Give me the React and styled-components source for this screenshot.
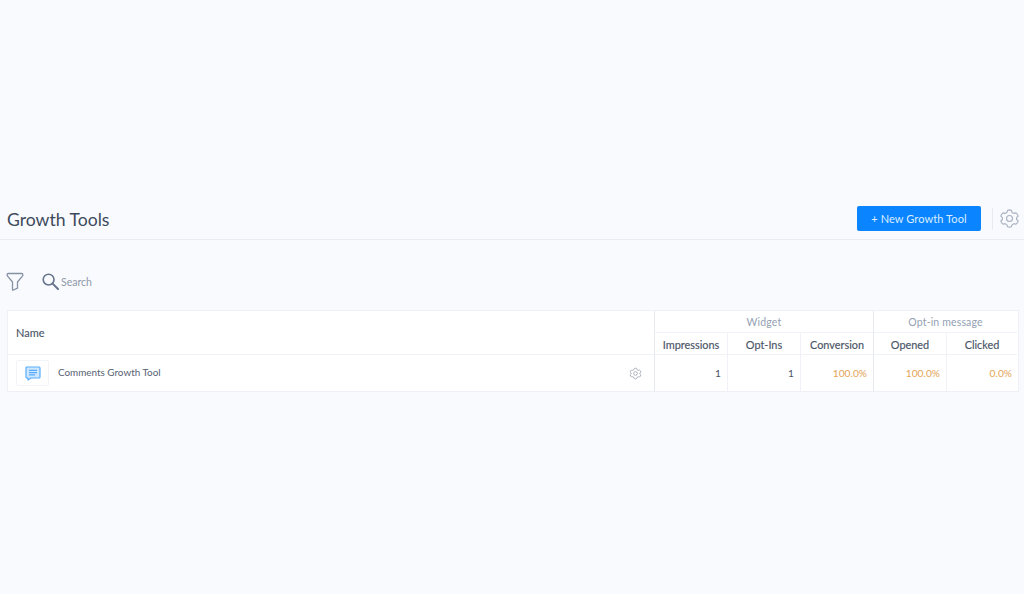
import styled, { createGlobalStyle } from "styled-components";

const GlobalStyle = createGlobalStyle`
  html, body {
    margin: 0;
    background: #f9fafe;
    font-family: Lato, "Open Sans", sans-serif;
    overflow: hidden;
  }
`;

const Page = styled.div`
  padding-top: 200px;
  height: 394px;
`;

const Header = styled.header`
  display: flex;
  align-items: center;
  justify-content: space-between;
  height: 39px;
  padding: 0 4px 0 7px;
  border-bottom: 1px solid #e8ebf1;
`;

const Title = styled.h1`
  margin: 0;
  font-size: 17.6px;
  font-weight: 400;
  color: #3d4a5c;
  line-height: 39px;
`;

const Actions = styled.div`
  display: flex;
  align-items: center;
  margin-top: -2px;
`;

const NewButton = styled.button`
  width: 124px;
  height: 25px;
  border: 0;
  border-radius: 2px;
  background: #0a84ff;
  color: #dcedff;
  font: 400 11px Lato, sans-serif;
  letter-spacing: 0.1px;
  padding: 0;
`;

const Divider = styled.span`
  width: 1px;
  height: 22px;
  margin: 0 6px 0 11px;
  background: #e8ebf1;
`;

const Toolbar = styled.div`
  display: flex;
  align-items: center;
  height: 30px;
  margin-top: 26px;
  padding-left: 6px;
`;

const SearchBox = styled.div`
  display: flex;
  align-items: center;
  gap: 2px;
  margin-left: 18px;
  color: #8f99a8;
  font-size: 10.5px;
`;

const SearchLabel = styled.span`
  padding-top: 2px;
`;

const Table = styled.div`
  display: grid;
  grid-template-columns: 646px 73px 73px 73px 73px 71px;
  grid-template-rows: 22px 22px 36px;
  margin: 15px 6px 0 8px;
  background: #fff;
  box-shadow: 0 0 0 1px #eef0f6;
`;

const Cell = styled.div`
  display: flex;
  align-items: center;
  justify-content: ${(p) => p.$align || "center"};
  box-sizing: border-box;
  border-left: ${(p) => (p.$strong ? "1px solid #e6e9f1" : "1px solid #f0f2f7")};
  border-bottom: ${(p) => (p.$last ? "0" : "1px solid #f0f2f7")};
  padding: 0 ${(p) => p.$pad || 6}px 0 5px;
  font-size: 10.2px;
  color: ${(p) => p.$color || "#4a5567"};
  grid-column: ${(p) => p.$col || "auto"};
  grid-row: ${(p) => p.$row || "auto"};
`;

const MetricHead = styled(Cell)`
  padding: 1px 0 0;
  font-size: 10.9px;
  -webkit-text-stroke: 0.15px #4a5567;
`;

const NameHead = styled(Cell)`
  border-left: 0;
  padding-left: 8px;
  font-size: 11px;
  -webkit-text-stroke: 0.1px #4a5567;
`;

const GroupHead = styled(Cell)`
  padding: 0;
  color: #949fb3;
  font-size: 10.5px;
  letter-spacing: 0.15px;
`;

const NameCell = styled(Cell)`
  border-left: 0;
  justify-content: flex-start;
  padding: 0 12px 0 8px;
  color: #566172;
  font-size: 9.9px;
`;

const ToolIcon = styled.span`
  display: flex;
  align-items: center;
  justify-content: center;
  width: 33px;
  height: 26px;
  margin-right: 9px;
  box-sizing: border-box;
  border: 1px solid #f2f4f8;
  border-radius: 2px;
`;

const ToolName = styled.span`
  flex: 1;
  margin-top: -3px;
`;

const Gear = ({ size, color }) => (
  <svg width={size} height={size} viewBox="0 0 24 24" fill="none" stroke={color} strokeWidth="1.3" strokeLinejoin="round">
    <path d="M12 2.2l2.2 0.5 0.8 2.4 2 1.1 2.4-0.6 1.6 1.6 0.9 2.1-1.8 1.7v2.1l1.8 1.7-0.9 2.1-1.6 1.6-2.4-0.6-2 1.1-0.8 2.4-2.2 0.5-2.2-0.5-0.8-2.4-2-1.1-2.4 0.6-1.6-1.6-0.9-2.1 1.8-1.7v-2.1l-1.8-1.7 0.9-2.1 1.6-1.6 2.4 0.6 2-1.1 0.8-2.4z" />
    <circle cx="12" cy="12" r="3.4" />
  </svg>
);

const Funnel = () => (
  <svg width="18" height="19" viewBox="0 0 18 19" fill="none" stroke="#8592a4" strokeWidth="1.3" strokeLinejoin="round">
    <path d="M2.2 1.5h13.6a1 1 0 0 1 1 1v1.2L11.5 10v6.2L7.4 18H6.5v-8L1.2 3.7V2.5a1 1 0 0 1 1-1z" />
  </svg>
);

const SearchGlass = () => (
  <svg width="17" height="17" viewBox="0 0 17 17" fill="none" stroke="#65748a" strokeWidth="1.6" strokeLinecap="round">
    <circle cx="6.6" cy="6.6" r="5.4" />
    <path d="M10.6 10.6l5.4 5.4" strokeWidth="2" />
  </svg>
);

const CommentIcon = () => (
  <svg width="16" height="15" viewBox="0 0 16 15" fill="#cfe6ff" stroke="#58aefc" strokeWidth="1.2" strokeLinejoin="round">
    <path d="M2 1h12a1 1 0 0 1 1 1v9a1 1 0 0 1-1 1H6l-3 2v-2H2a1 1 0 0 1-1-1V2a1 1 0 0 1 1-1z" />
    <path d="M4 4.3h8M4 6.6h8M4 8.9h6" fill="none" />
  </svg>
);

const metricHeads = ["Impressions", "Opt-Ins", "Conversion", "Opened", "Clicked"];
const metricValues = [
  { value: "1", color: "#4a5567" },
  { value: "1", color: "#4a5567" },
  { value: "100.0%", color: "#e5a356" },
  { value: "100.0%", color: "#e5a356" },
  { value: "0.0%", color: "#e5a356", pad: 5 },
];
const strongCols = [0, 3];

export default function App() {
  return (
    <Page>
      <GlobalStyle />
      <Header>
        <Title>Growth Tools</Title>
        <Actions>
          <NewButton>+ New Growth Tool</NewButton>
          <Divider />
          <Gear size={21} color="#a9b2c0" />
        </Actions>
      </Header>

      <Toolbar>
        <Funnel />
        <SearchBox>
          <SearchGlass />
          <SearchLabel>Search</SearchLabel>
        </SearchBox>
      </Toolbar>

      <Table>
        <NameHead $col="1" $row="1 / span 2" $align="flex-start">Name</NameHead>
        <GroupHead $col="2 / span 3" $row="1" $strong>Widget</GroupHead>
        <GroupHead $col="5 / span 2" $row="1" $strong>Opt-in message</GroupHead>

        {metricHeads.map((head, i) => (
          <MetricHead key={head} $col={i + 2} $row="2" $strong={strongCols.includes(i)}>
            {head}
          </MetricHead>
        ))}

        <NameCell $col="1" $row="3" $last>
          <ToolIcon>
            <CommentIcon />
          </ToolIcon>
          <ToolName>Comments Growth Tool</ToolName>
          <Gear size={13} color="#8d97a6" />
        </NameCell>

        {metricValues.map((m, i) => (
          <Cell key={i} $col={i + 2} $row="3" $align="flex-end" $pad={m.pad} $color={m.color} $strong={strongCols.includes(i)} $last>
            {m.value}
          </Cell>
        ))}
      </Table>
    </Page>
  );
}
